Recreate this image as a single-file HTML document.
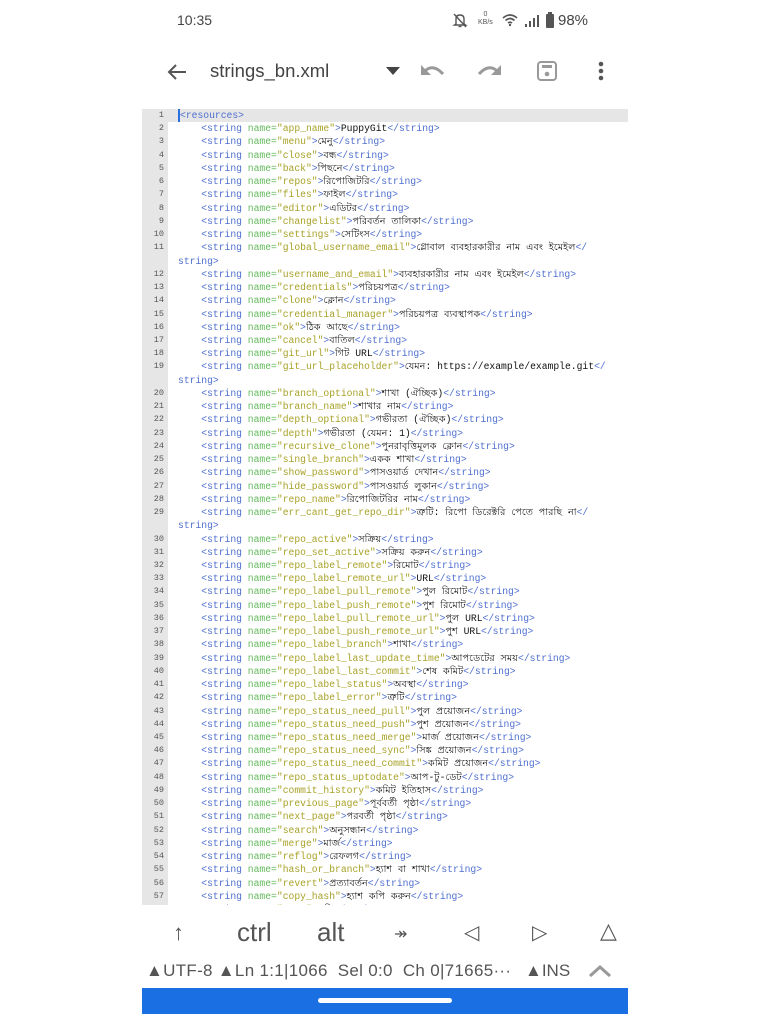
<!DOCTYPE html>
<html><head><meta charset="utf-8"><style>
*{margin:0;padding:0;box-sizing:border-box}
body{width:768px;height:1024px;background:#fff;position:relative;overflow:hidden;font-family:"Liberation Sans",sans-serif}
.abs{position:absolute}
#code{position:absolute;left:142px;top:109px;width:486px;height:796px;overflow:hidden}
#gut{position:absolute;left:0;top:-8px;width:26px;height:805px;background:#e6e6e6}
.r{position:relative;height:13.24px;line-height:13.24px;font-family:"Liberation Mono","DejaVu Sans Mono",monospace;font-size:9.7px;color:#111;white-space:pre}
.r s{text-decoration:none;position:absolute;left:0;width:22px;text-align:right;color:#555;font-size:8.5px}
.r code{position:absolute;left:36px;font-family:inherit}
.r b{font-weight:normal;color:#4f6fd0}
.r i{font-style:normal;color:#62b85a}
.r u{text-decoration:none;color:#a8a228}
.hl{background:#e6e6e6}
.k{position:absolute;top:917px;color:#555;font-size:26px}
</style></head><body>
<div class="abs" style="left:177px;top:12px;font-size:14px;color:#444">10:35</div>
<svg class="abs" style="left:452px;top:12px" width="16" height="16" viewBox="0 0 16 16"><path d="M4 12V7Q4 3 8 3Q12 3 12 7V12L13.5 13H2.5Z" stroke="#555" stroke-width="1.4" fill="none"/><path d="M6.5 14.5H9.5" stroke="#555" stroke-width="1.4"/><path d="M2 2L14 15" stroke="#555" stroke-width="1.4"/></svg>
<div class="abs" style="left:478px;top:11px;font-size:7px;color:#555;text-align:center;line-height:8px">0<br>KB/s</div>
<svg class="abs" style="left:502px;top:13px" width="16" height="14" viewBox="0 0 16 14"><path d="M1 5 Q8 -1 15 5 M3.5 7.5 Q8 3.5 12.5 7.5 M6 10 Q8 8.5 10 10" stroke="#555" stroke-width="1.6" fill="none"/><circle cx="8" cy="12" r="1.2" fill="#555"/></svg>
<svg class="abs" style="left:524px;top:14px" width="16" height="14"><rect x="1" y="10" width="2" height="3" fill="#555"/><rect x="5" y="7" width="2" height="6" fill="#555"/><rect x="9" y="4" width="2" height="9" fill="#555"/><rect x="13" y="1" width="2" height="12" fill="#555"/></svg>
<svg class="abs" style="left:546px;top:12px" width="8" height="16"><rect x="2" y="0" width="4" height="2" fill="#555"/><rect x="0" y="2" width="8" height="14" rx="1" fill="#555"/></svg>
<div class="abs" style="left:558px;top:12px;font-size:15px;color:#444">98%</div>

<svg class="abs" style="left:165px;top:60px" width="24" height="24" viewBox="0 0 24 24"><path d="M21 12H4M11 5l-7 7 7 7" stroke="#555" stroke-width="2" fill="none"/></svg>
<div class="abs" style="left:210px;top:60px;font-size:18.5px;color:#444">strings_bn.xml</div>
<svg class="abs" style="left:386px;top:66px" width="14" height="10"><path d="M0 1H14L7 9Z" fill="#444"/></svg>
<svg class="abs" style="left:418px;top:60px" width="28" height="22" viewBox="0 0 28 22"><path d="M5 13Q14 2 25 14" stroke="#999" stroke-width="3" fill="none"/><path d="M3 5L3 15L13 15Z" fill="#999"/></svg>
<svg class="abs" style="left:476px;top:60px" width="28" height="22" viewBox="0 0 28 22"><path d="M3 14Q14 2 23 13" stroke="#999" stroke-width="3" fill="none"/><path d="M25 5L25 15L15 15Z" fill="#999"/></svg>
<svg class="abs" style="left:536px;top:60px" width="22" height="22" viewBox="0 0 22 22"><rect x="2" y="2" width="18" height="18" rx="3" stroke="#999" stroke-width="2" fill="none"/><rect x="6" y="5" width="10" height="3" fill="#999"/><circle cx="11" cy="14" r="2.3" fill="#999"/></svg>
<svg class="abs" style="left:597px;top:60px" width="8" height="22"><circle cx="4" cy="4" r="2.3" fill="#555"/><circle cx="4" cy="11" r="2.3" fill="#555"/><circle cx="4" cy="18" r="2.3" fill="#555"/></svg>

<div id="code"><div id="gut"></div>
<div class="r hl"><s>1</s><code style="left:36px;border-left:2px solid #2a6fe0"><b>&lt;resources&gt;</b></code></div>
<div class="r"><s>2</s><code>    <b>&lt;string</b> <i>name=</i><u>"app_name"</u><b>&gt;</b>PuppyGit<b>&lt;/string&gt;</b></code></div>
<div class="r"><s>3</s><code>    <b>&lt;string</b> <i>name=</i><u>"menu"</u><b>&gt;</b>মেনু<b>&lt;/string&gt;</b></code></div>
<div class="r"><s>4</s><code>    <b>&lt;string</b> <i>name=</i><u>"close"</u><b>&gt;</b>বন্ধ<b>&lt;/string&gt;</b></code></div>
<div class="r"><s>5</s><code>    <b>&lt;string</b> <i>name=</i><u>"back"</u><b>&gt;</b>পিছনে<b>&lt;/string&gt;</b></code></div>
<div class="r"><s>6</s><code>    <b>&lt;string</b> <i>name=</i><u>"repos"</u><b>&gt;</b>রিপোজিটরি<b>&lt;/string&gt;</b></code></div>
<div class="r"><s>7</s><code>    <b>&lt;string</b> <i>name=</i><u>"files"</u><b>&gt;</b>ফাইল<b>&lt;/string&gt;</b></code></div>
<div class="r"><s>8</s><code>    <b>&lt;string</b> <i>name=</i><u>"editor"</u><b>&gt;</b>এডিটর<b>&lt;/string&gt;</b></code></div>
<div class="r"><s>9</s><code>    <b>&lt;string</b> <i>name=</i><u>"changelist"</u><b>&gt;</b>পরিবর্তন তালিকা<b>&lt;/string&gt;</b></code></div>
<div class="r"><s>10</s><code>    <b>&lt;string</b> <i>name=</i><u>"settings"</u><b>&gt;</b>সেটিংস<b>&lt;/string&gt;</b></code></div>
<div class="r"><s>11</s><code>    <b>&lt;string</b> <i>name=</i><u>"global_username_email"</u><b>&gt;</b>গ্লোবাল ব্যবহারকারীর নাম এবং ইমেইল<b>&lt;/</b></code></div>
<div class="r"><code><b>string&gt;</b></code></div>
<div class="r"><s>12</s><code>    <b>&lt;string</b> <i>name=</i><u>"username_and_email"</u><b>&gt;</b>ব্যবহারকারীর নাম এবং ইমেইল<b>&lt;/string&gt;</b></code></div>
<div class="r"><s>13</s><code>    <b>&lt;string</b> <i>name=</i><u>"credentials"</u><b>&gt;</b>পরিচয়পত্র<b>&lt;/string&gt;</b></code></div>
<div class="r"><s>14</s><code>    <b>&lt;string</b> <i>name=</i><u>"clone"</u><b>&gt;</b>ক্লোন<b>&lt;/string&gt;</b></code></div>
<div class="r"><s>15</s><code>    <b>&lt;string</b> <i>name=</i><u>"credential_manager"</u><b>&gt;</b>পরিচয়পত্র ব্যবস্থাপক<b>&lt;/string&gt;</b></code></div>
<div class="r"><s>16</s><code>    <b>&lt;string</b> <i>name=</i><u>"ok"</u><b>&gt;</b>ঠিক আছে<b>&lt;/string&gt;</b></code></div>
<div class="r"><s>17</s><code>    <b>&lt;string</b> <i>name=</i><u>"cancel"</u><b>&gt;</b>বাতিল<b>&lt;/string&gt;</b></code></div>
<div class="r"><s>18</s><code>    <b>&lt;string</b> <i>name=</i><u>"git_url"</u><b>&gt;</b>গিট URL<b>&lt;/string&gt;</b></code></div>
<div class="r"><s>19</s><code>    <b>&lt;string</b> <i>name=</i><u>"git_url_placeholder"</u><b>&gt;</b>যেমন: https://example/example.git<b>&lt;/</b></code></div>
<div class="r"><code><b>string&gt;</b></code></div>
<div class="r"><s>20</s><code>    <b>&lt;string</b> <i>name=</i><u>"branch_optional"</u><b>&gt;</b>শাখা (ঐচ্ছিক)<b>&lt;/string&gt;</b></code></div>
<div class="r"><s>21</s><code>    <b>&lt;string</b> <i>name=</i><u>"branch_name"</u><b>&gt;</b>শাখার নাম<b>&lt;/string&gt;</b></code></div>
<div class="r"><s>22</s><code>    <b>&lt;string</b> <i>name=</i><u>"depth_optional"</u><b>&gt;</b>গভীরতা (ঐচ্ছিক)<b>&lt;/string&gt;</b></code></div>
<div class="r"><s>23</s><code>    <b>&lt;string</b> <i>name=</i><u>"depth"</u><b>&gt;</b>গভীরতা (যেমন: 1)<b>&lt;/string&gt;</b></code></div>
<div class="r"><s>24</s><code>    <b>&lt;string</b> <i>name=</i><u>"recursive_clone"</u><b>&gt;</b>পুনরাবৃত্তিমূলক ক্লোন<b>&lt;/string&gt;</b></code></div>
<div class="r"><s>25</s><code>    <b>&lt;string</b> <i>name=</i><u>"single_branch"</u><b>&gt;</b>একক শাখা<b>&lt;/string&gt;</b></code></div>
<div class="r"><s>26</s><code>    <b>&lt;string</b> <i>name=</i><u>"show_password"</u><b>&gt;</b>পাসওয়ার্ড দেখান<b>&lt;/string&gt;</b></code></div>
<div class="r"><s>27</s><code>    <b>&lt;string</b> <i>name=</i><u>"hide_password"</u><b>&gt;</b>পাসওয়ার্ড লুকান<b>&lt;/string&gt;</b></code></div>
<div class="r"><s>28</s><code>    <b>&lt;string</b> <i>name=</i><u>"repo_name"</u><b>&gt;</b>রিপোজিটরির নাম<b>&lt;/string&gt;</b></code></div>
<div class="r"><s>29</s><code>    <b>&lt;string</b> <i>name=</i><u>"err_cant_get_repo_dir"</u><b>&gt;</b>ত্রুটি: রিপো ডিরেক্টরি পেতে পারছি না<b>&lt;/</b></code></div>
<div class="r"><code><b>string&gt;</b></code></div>
<div class="r"><s>30</s><code>    <b>&lt;string</b> <i>name=</i><u>"repo_active"</u><b>&gt;</b>সক্রিয়<b>&lt;/string&gt;</b></code></div>
<div class="r"><s>31</s><code>    <b>&lt;string</b> <i>name=</i><u>"repo_set_active"</u><b>&gt;</b>সক্রিয় করুন<b>&lt;/string&gt;</b></code></div>
<div class="r"><s>32</s><code>    <b>&lt;string</b> <i>name=</i><u>"repo_label_remote"</u><b>&gt;</b>রিমোট<b>&lt;/string&gt;</b></code></div>
<div class="r"><s>33</s><code>    <b>&lt;string</b> <i>name=</i><u>"repo_label_remote_url"</u><b>&gt;</b>URL<b>&lt;/string&gt;</b></code></div>
<div class="r"><s>34</s><code>    <b>&lt;string</b> <i>name=</i><u>"repo_label_pull_remote"</u><b>&gt;</b>পুল রিমোট<b>&lt;/string&gt;</b></code></div>
<div class="r"><s>35</s><code>    <b>&lt;string</b> <i>name=</i><u>"repo_label_push_remote"</u><b>&gt;</b>পুশ রিমোট<b>&lt;/string&gt;</b></code></div>
<div class="r"><s>36</s><code>    <b>&lt;string</b> <i>name=</i><u>"repo_label_pull_remote_url"</u><b>&gt;</b>পুল URL<b>&lt;/string&gt;</b></code></div>
<div class="r"><s>37</s><code>    <b>&lt;string</b> <i>name=</i><u>"repo_label_push_remote_url"</u><b>&gt;</b>পুশ URL<b>&lt;/string&gt;</b></code></div>
<div class="r"><s>38</s><code>    <b>&lt;string</b> <i>name=</i><u>"repo_label_branch"</u><b>&gt;</b>শাখা<b>&lt;/string&gt;</b></code></div>
<div class="r"><s>39</s><code>    <b>&lt;string</b> <i>name=</i><u>"repo_label_last_update_time"</u><b>&gt;</b>আপডেটের সময়<b>&lt;/string&gt;</b></code></div>
<div class="r"><s>40</s><code>    <b>&lt;string</b> <i>name=</i><u>"repo_label_last_commit"</u><b>&gt;</b>শেষ কমিট<b>&lt;/string&gt;</b></code></div>
<div class="r"><s>41</s><code>    <b>&lt;string</b> <i>name=</i><u>"repo_label_status"</u><b>&gt;</b>অবস্থা<b>&lt;/string&gt;</b></code></div>
<div class="r"><s>42</s><code>    <b>&lt;string</b> <i>name=</i><u>"repo_label_error"</u><b>&gt;</b>ত্রুটি<b>&lt;/string&gt;</b></code></div>
<div class="r"><s>43</s><code>    <b>&lt;string</b> <i>name=</i><u>"repo_status_need_pull"</u><b>&gt;</b>পুল প্রয়োজন<b>&lt;/string&gt;</b></code></div>
<div class="r"><s>44</s><code>    <b>&lt;string</b> <i>name=</i><u>"repo_status_need_push"</u><b>&gt;</b>পুশ প্রয়োজন<b>&lt;/string&gt;</b></code></div>
<div class="r"><s>45</s><code>    <b>&lt;string</b> <i>name=</i><u>"repo_status_need_merge"</u><b>&gt;</b>মার্জ প্রয়োজন<b>&lt;/string&gt;</b></code></div>
<div class="r"><s>46</s><code>    <b>&lt;string</b> <i>name=</i><u>"repo_status_need_sync"</u><b>&gt;</b>সিঙ্ক প্রয়োজন<b>&lt;/string&gt;</b></code></div>
<div class="r"><s>47</s><code>    <b>&lt;string</b> <i>name=</i><u>"repo_status_need_commit"</u><b>&gt;</b>কমিট প্রয়োজন<b>&lt;/string&gt;</b></code></div>
<div class="r"><s>48</s><code>    <b>&lt;string</b> <i>name=</i><u>"repo_status_uptodate"</u><b>&gt;</b>আপ-টু-ডেট<b>&lt;/string&gt;</b></code></div>
<div class="r"><s>49</s><code>    <b>&lt;string</b> <i>name=</i><u>"commit_history"</u><b>&gt;</b>কমিট ইতিহাস<b>&lt;/string&gt;</b></code></div>
<div class="r"><s>50</s><code>    <b>&lt;string</b> <i>name=</i><u>"previous_page"</u><b>&gt;</b>পূর্ববর্তী পৃষ্ঠা<b>&lt;/string&gt;</b></code></div>
<div class="r"><s>51</s><code>    <b>&lt;string</b> <i>name=</i><u>"next_page"</u><b>&gt;</b>পরবর্তী পৃষ্ঠা<b>&lt;/string&gt;</b></code></div>
<div class="r"><s>52</s><code>    <b>&lt;string</b> <i>name=</i><u>"search"</u><b>&gt;</b>অনুসন্ধান<b>&lt;/string&gt;</b></code></div>
<div class="r"><s>53</s><code>    <b>&lt;string</b> <i>name=</i><u>"merge"</u><b>&gt;</b>মার্জ<b>&lt;/string&gt;</b></code></div>
<div class="r"><s>54</s><code>    <b>&lt;string</b> <i>name=</i><u>"reflog"</u><b>&gt;</b>রেফলগ<b>&lt;/string&gt;</b></code></div>
<div class="r"><s>55</s><code>    <b>&lt;string</b> <i>name=</i><u>"hash_or_branch"</u><b>&gt;</b>হ্যাশ বা শাখা<b>&lt;/string&gt;</b></code></div>
<div class="r"><s>56</s><code>    <b>&lt;string</b> <i>name=</i><u>"revert"</u><b>&gt;</b>প্রত্যাবর্তন<b>&lt;/string&gt;</b></code></div>
<div class="r"><s>57</s><code>    <b>&lt;string</b> <i>name=</i><u>"copy_hash"</u><b>&gt;</b>হ্যাশ কপি করুন<b>&lt;/string&gt;</b></code></div>
<div class="r"><s>58</s><code>    <b>&lt;string</b> <i>name=</i><u>"copy"</u><b>&gt;</b>কপি<b>&lt;/string&gt;</b></code></div>
</div>

<div class="k" style="left:173px;font-size:22px;top:920px;font-weight:bold">↑</div>
<div class="k" style="left:237px">ctrl</div>
<div class="k" style="left:317px">alt</div>
<div class="k" style="left:394px;font-size:16px;top:924px">↠</div>
<div class="k" style="left:464px;font-size:20px;top:920px">◁</div>
<div class="k" style="left:532px;font-size:20px;top:920px">▷</div>
<div class="k" style="left:600px;font-size:22px;top:918px">△</div>

<div class="abs" style="left:146px;top:961px;font-size:17px;color:#555;white-space:pre;letter-spacing:0.3px">▲UTF-8 ▲Ln 1:1|1066  Sel 0:0  Ch 0|71665···</div>
<div class="abs" style="left:525px;top:961px;font-size:17px;color:#555">▲INS</div>
<svg class="abs" style="left:588px;top:964px" width="24" height="14"><path d="M2 12L12 3L22 12" stroke="#999" stroke-width="3" fill="none"/></svg>
<div class="abs" style="left:142px;top:988px;width:486px;height:26px;background:#1a6fe3"></div>
<div class="abs" style="left:318px;top:998px;width:134px;height:5px;border-radius:3px;background:#fff"></div>
</body></html>
